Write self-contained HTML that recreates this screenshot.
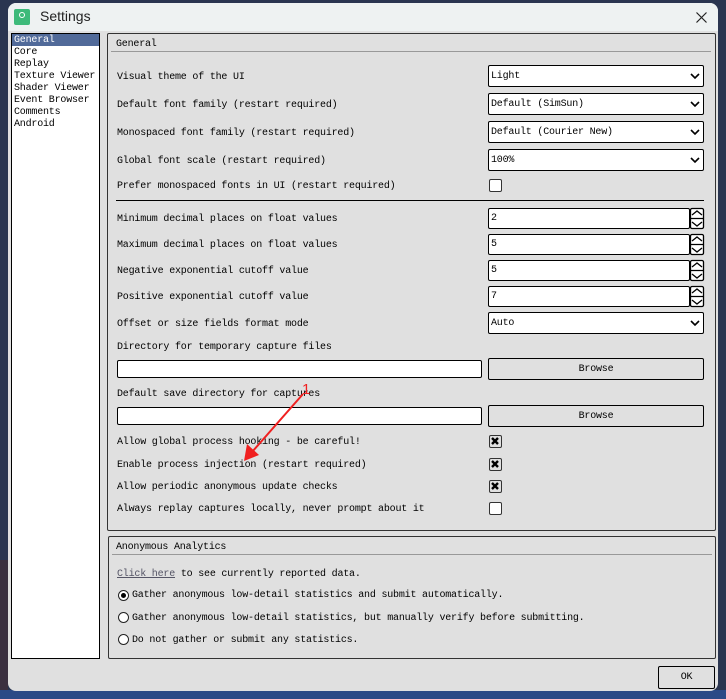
<!DOCTYPE html>
<html><head><style>
*{box-sizing:border-box;margin:0;padding:0}
body{width:726px;height:699px;overflow:hidden;position:relative;background:#2a3550;font-family:"Liberation Mono","Noto Sans CJK SC",monospace;font-size:10px;letter-spacing:-0.2px;color:#000}
.abs{position:absolute}
.win{left:8px;top:3px;width:710px;height:688px;background:#e0e0e0;border-radius:8px;overflow:hidden}
.title{left:0;top:0;width:710px;height:28px;background:#eef2f2}
.lbl{position:absolute;white-space:nowrap;line-height:12px}
.box{position:absolute;background:#fff;border:1px solid #000;border-radius:2px}
.btn{position:absolute;background:#e0e0e0;border:1px solid #000;border-radius:2px;text-align:center;line-height:22px}
.chk{position:absolute;width:13px;height:13px;border:1px solid #333;background:#fff;border-radius:2px}
.grp{position:absolute;border:1px solid #333;border-radius:2px}
.radio{position:absolute;width:11px;height:11px;border:1px solid #222;border-radius:50%;background:#fff}
.chev{position:absolute;right:3px;top:7px}
.spin{position:absolute;left:690px;width:14px;height:21px;background:#fff;border:1px solid #000;border-radius:2px}
</style></head><body>
<div class="abs" style="left:0;top:560px;width:8px;height:139px;background:#3b3040"></div>
<div class="abs" style="left:0;top:690px;width:726px;height:9px;background:#2b4a86"></div>
<div class="abs win">
 <div class="abs title"></div>
 <div class="abs" style="left:6px;top:6px;width:16px;height:16px;background:#3dba7a;border-radius:2px"></div>
 <div class="abs" style="left:11px;top:9px;width:6px;height:6px;border:1.5px solid #fff;border-radius:50%"></div>
 <div class="abs" style="left:32px;top:5px;font-family:'Liberation Sans',sans-serif;font-size:14px;letter-spacing:0;color:#222">Settings</div>
 <svg class="abs" style="left:688px;top:9px" width="11" height="11"><path d="M0.5 0.5L10.5 10.5M10.5 0.5L0.5 10.5" stroke="#222" stroke-width="1.2"/></svg>
</div>
<!-- list -->
<div class="abs" style="left:11px;top:33px;width:89px;height:626px;background:#fff;border:1px solid #000"></div>
<div class="abs" style="left:12px;top:34px;width:87px;height:12px;background:#516a99"></div>
<div class="lbl" style="left:14px;top:35px;color:#fff">General</div>
<div class="lbl" style="left:14px;top:47px">Core</div>
<div class="lbl" style="left:14px;top:59px">Replay</div>
<div class="lbl" style="left:14px;top:71px">Texture Viewer</div>
<div class="lbl" style="left:14px;top:83px">Shader Viewer</div>
<div class="lbl" style="left:14px;top:95px">Event Browser</div>
<div class="lbl" style="left:14px;top:107px">Comments</div>
<div class="lbl" style="left:14px;top:119px">Android</div>
<!-- general group -->
<div class="grp" style="left:107px;top:33px;width:609px;height:498px"></div>
<div class="lbl" style="left:116px;top:39px">General</div>
<div class="abs" style="left:111px;top:51px;width:600px;height:1px;background:#999"></div>

<div class="lbl" style="left:117px;top:72px">Visual theme of the UI</div>
<div class="lbl" style="left:117px;top:100px">Default font family (restart required)</div>
<div class="lbl" style="left:117px;top:128px">Monospaced font family (restart required)</div>
<div class="lbl" style="left:117px;top:156px">Global font scale (restart required)</div>
<div class="lbl" style="left:117px;top:181px">Prefer monospaced fonts in UI (restart required)</div>
<div class="box" style="left:488px;top:65px;width:216px;height:22px"><span class="lbl" style="left:2px;top:5px">Light</span><svg class="chev" width="10" height="7"><path d="M1 1L5 5L9 1" fill="none" stroke="#000" stroke-width="1.6"/></svg></div>
<div class="box" style="left:488px;top:93px;width:216px;height:22px"><span class="lbl" style="left:2px;top:5px">Default (SimSun)</span><svg class="chev" width="10" height="7"><path d="M1 1L5 5L9 1" fill="none" stroke="#000" stroke-width="1.6"/></svg></div>
<div class="box" style="left:488px;top:121px;width:216px;height:22px"><span class="lbl" style="left:2px;top:5px">Default (Courier New)</span><svg class="chev" width="10" height="7"><path d="M1 1L5 5L9 1" fill="none" stroke="#000" stroke-width="1.6"/></svg></div>
<div class="box" style="left:488px;top:149px;width:216px;height:22px"><span class="lbl" style="left:2px;top:5px">100%</span><svg class="chev" width="10" height="7"><path d="M1 1L5 5L9 1" fill="none" stroke="#000" stroke-width="1.6"/></svg></div>
<div class="chk" style="left:489px;top:179px"></div>
<div class="abs" style="left:116px;top:200px;width:588px;height:1px;background:#000"></div>

<div class="lbl" style="left:117px;top:214px">Minimum decimal places on float values</div>
<div class="lbl" style="left:117px;top:240px">Maximum decimal places on float values</div>
<div class="lbl" style="left:117px;top:266px">Negative exponential cutoff value</div>
<div class="lbl" style="left:117px;top:292px">Positive exponential cutoff value</div>
<div class="lbl" style="left:117px;top:319px">Offset or size fields format mode</div>
<div class="box" style="left:488px;top:208px;width:202px;height:21px"><span class="lbl" style="left:2px;top:4px">2</span></div>
<div class="box" style="left:488px;top:234px;width:202px;height:21px"><span class="lbl" style="left:2px;top:4px">5</span></div>
<div class="box" style="left:488px;top:260px;width:202px;height:21px"><span class="lbl" style="left:2px;top:4px">5</span></div>
<div class="box" style="left:488px;top:286px;width:202px;height:21px"><span class="lbl" style="left:2px;top:4px">7</span></div>
<svg class="abs" style="left:0;top:0" width="726" height="699">
<g fill="none" stroke="#000" stroke-width="1.3">
<rect x="690.5" y="208.5" width="13" height="20" rx="1.5" fill="#fff"/><path d="M692 215L697 211L702 215M692 222L697 226L702 222M691 218.5H703"/>
<rect x="690.5" y="234.5" width="13" height="20" rx="1.5" fill="#fff"/><path d="M692 241L697 237L702 241M692 248L697 252L702 248M691 244.5H703"/>
<rect x="690.5" y="260.5" width="13" height="20" rx="1.5" fill="#fff"/><path d="M692 267L697 263L702 267M692 274L697 278L702 274M691 270.5H703"/>
<rect x="690.5" y="286.5" width="13" height="20" rx="1.5" fill="#fff"/><path d="M692 293L697 289L702 293M692 300L697 304L702 300M691 296.5H703"/>
</g>
</svg>
<div class="box" style="left:488px;top:312px;width:216px;height:22px"><span class="lbl" style="left:2px;top:5px">Auto</span><svg class="chev" width="10" height="7"><path d="M1 1L5 5L9 1" fill="none" stroke="#000" stroke-width="1.6"/></svg></div>

<div class="lbl" style="left:117px;top:342px">Directory for temporary capture files</div>
<div class="box" style="left:117px;top:360px;width:365px;height:18px"></div>
<div class="btn" style="left:488px;top:358px;width:216px;height:22px">Browse</div>
<div class="lbl" style="left:117px;top:389px">Default save directory for captures</div>
<div class="box" style="left:117px;top:407px;width:365px;height:18px"></div>
<div class="btn" style="left:488px;top:405px;width:216px;height:22px">Browse</div>

<div class="lbl" style="left:117px;top:437px">Allow global process hooking - be careful!</div>
<div class="lbl" style="left:117px;top:460px">Enable process injection (restart required)</div>
<div class="lbl" style="left:117px;top:482px">Allow periodic anonymous update checks</div>
<div class="lbl" style="left:117px;top:504px">Always replay captures locally, never prompt about it</div>
<svg class="abs" style="left:0;top:0" width="726" height="699">
<g stroke="#000">
<path d="M492 438L498 444M498 438L492 444" stroke-width="2.4"/>
<path d="M492 461L498 467M498 461L492 467" stroke-width="2.4"/>
<path d="M492 483L498 489M498 483L492 489" stroke-width="2.4"/>
</g>
</svg>
<div class="chk" style="left:489px;top:435px;background:transparent"></div>
<div class="chk" style="left:489px;top:458px;background:transparent"></div>
<div class="chk" style="left:489px;top:480px;background:transparent"></div>
<div class="chk" style="left:489px;top:502px"></div>

<!-- analytics -->
<div class="grp" style="left:108px;top:536px;width:608px;height:123px"></div>
<div class="lbl" style="left:116px;top:542px">Anonymous Analytics</div>
<div class="abs" style="left:112px;top:554px;width:600px;height:1px;background:#999"></div>
<div class="lbl" style="left:117px;top:569px"><span style="color:#556;text-decoration:underline">Click here</span> to see currently reported data.</div>
<div class="radio" style="left:118px;top:590px"><div class="abs" style="left:2px;top:2px;width:5px;height:5px;border-radius:50%;background:#000"></div></div>
<div class="lbl" style="left:132px;top:590px">Gather anonymous low-detail statistics and submit automatically.</div>
<div class="radio" style="left:118px;top:612px"></div>
<div class="lbl" style="left:132px;top:613px">Gather anonymous low-detail statistics, but manually verify before submitting.</div>
<div class="radio" style="left:118px;top:634px"></div>
<div class="lbl" style="left:132px;top:635px">Do not gather or submit any statistics.</div>

<div class="btn" style="left:658px;top:666px;width:57px;height:23px">OK</div>

<svg class="abs" style="left:0;top:0" width="726" height="699">
<line x1="303" y1="394" x2="252" y2="452" stroke="#f02020" stroke-width="2"/>
<polygon points="244,461 247,444 259,455" fill="#f02020"/>
<text x="302" y="394" fill="#f02020" font-family="Liberation Sans" font-size="15">1</text>
</svg>
</body></html>
